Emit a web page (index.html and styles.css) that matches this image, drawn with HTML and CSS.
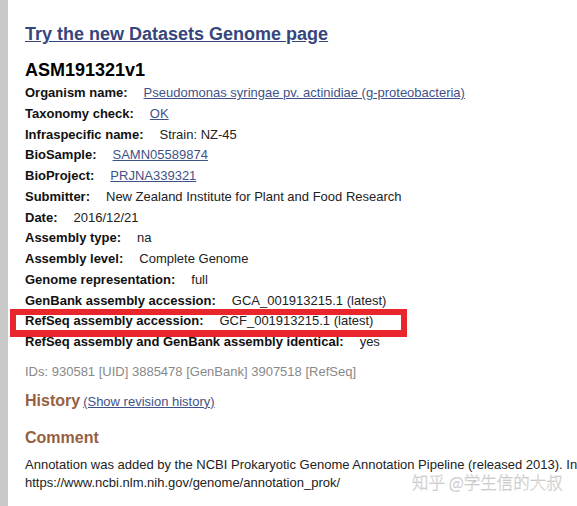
FILE: index.html
```html
<!DOCTYPE html>
<html lang="en">
<head>
<meta charset="utf-8">
<title>ASM191321v1 - Assembly</title>
<link rel="stylesheet" href="styles.css">
</head>
<body>
<div class="page">
  <div class="strip"></div>
  <main class="content">
    <h2 class="title"><a href="#">Try the new Datasets Genome page</a></h2>
    <h1 class="acc">ASM191321v1</h1>
    <dl class="meta">
      <div class="row"><dt>Organism name:</dt><dd><a href="#">Pseudomonas syringae pv. actinidiae (g-proteobacteria)</a></dd></div>
      <div class="row"><dt>Taxonomy check:</dt><dd><a href="#">OK</a></dd></div>
      <div class="row"><dt>Infraspecific name:</dt><dd>Strain: NZ-45</dd></div>
      <div class="row"><dt>BioSample:</dt><dd><a href="#">SAMN05589874</a></dd></div>
      <div class="row"><dt>BioProject:</dt><dd><a href="#">PRJNA339321</a></dd></div>
      <div class="row"><dt>Submitter:</dt><dd>New Zealand Institute for Plant and Food Research</dd></div>
      <div class="row"><dt>Date:</dt><dd>2016/12/21</dd></div>
      <div class="row"><dt>Assembly type:</dt><dd>na</dd></div>
      <div class="row"><dt>Assembly level:</dt><dd>Complete Genome</dd></div>
      <div class="row"><dt>Genome representation:</dt><dd>full</dd></div>
      <div class="row"><dt>GenBank assembly accession:</dt><dd>GCA_001913215.1 (latest)</dd></div>
      <div class="row row-marked"><dt>RefSeq assembly accession:</dt><dd>GCF_001913215.1 (latest)</dd><span class="mark"></span></div>
      <div class="row"><dt>RefSeq assembly and GenBank assembly identical:</dt><dd>yes</dd></div>
    </dl>
    <p class="ids">IDs: 930581 [UID] 3885478 [GenBank] 3907518 [RefSeq]</p>
    <h3 class="section history">History<a href="#" class="small-link">(Show revision history)</a></h3>
    <h3 class="section">Comment</h3>
    <p class="comment">Annotation was added by the NCBI Prokaryotic Genome Annotation Pipeline (released 2013). Information about the Pipeline can be found here:<br>https://www.ncbi.nlm.nih.gov/genome/annotation_prok/</p>
  </main>
  <div class="watermark">知乎 @学生信的大叔</div>
</div>
</body>
</html>
```
FILE: styles.css
```css
html, body {
  margin: 0;
  padding: 0;
  overflow: hidden;
  background: #fff;
}
body {
  font-family: "Liberation Sans", Arial, sans-serif;
  color: #111;
}
.page {
  position: relative;
  display: flex;
  min-height: 506px;
}
.strip {
  width: 8px;
  flex: 0 0 8px;
  background: #c9c9c9;
}
.content {
  flex: 1;
  min-width: 0;
  padding: 23px 0 0 17px;
}
.title {
  margin: 0;
  font-size: 18px;
  line-height: 22px;
  font-weight: bold;
}
.title a {
  color: #36467c;
  text-decoration: underline;
}
.acc {
  margin: 14px 0 0;
  font-size: 18px;
  line-height: 22px;
  font-weight: bold;
  color: #000;
}
.meta {
  margin: 2px 0 0;
  font-size: 13px;
  line-height: 20.75px;
}
.row {
  position: relative;
  display: flex;
  white-space: nowrap;
}
.row dt {
  font-weight: bold;
  color: #111;
}
.row dd {
  margin: 0 0 0 16px;
  color: #222;
}
.row a, .small-link {
  color: #3f5287;
  text-decoration: underline;
}
.mark {
  position: absolute;
  left: -15px;
  top: -2px;
  width: 385px;
  height: 15px;
  border: 6px solid #e8262b;
  border-bottom-width: 7px;
  pointer-events: none;
}
.ids {
  margin: 9px 0 0;
  font-size: 13px;
  line-height: 20px;
  color: #888;
}
.section {
  margin: 14px 0 0;
  font-size: 16px;
  line-height: 22px;
  font-weight: bold;
  color: #96603f;
}
.history {
  margin-top: 8px;
}
.small-link {
  margin-left: 3px;
  font-size: 13px;
  font-weight: normal;
}
.comment {
  margin: 7px 0 0;
  font-size: 13px;
  line-height: 18px;
  color: #222;
  white-space: nowrap;
}
.watermark {
  position: absolute;
  left: 412px;
  top: 470px;
  font-family: "Noto Sans CJK SC", sans-serif;
  font-size: 16.5px;
  font-weight: 300;
  line-height: 24px;
  color: #f5f5f5;
  -webkit-text-stroke: 0.4px #c2c2c2;
  white-space: nowrap;
}
```
